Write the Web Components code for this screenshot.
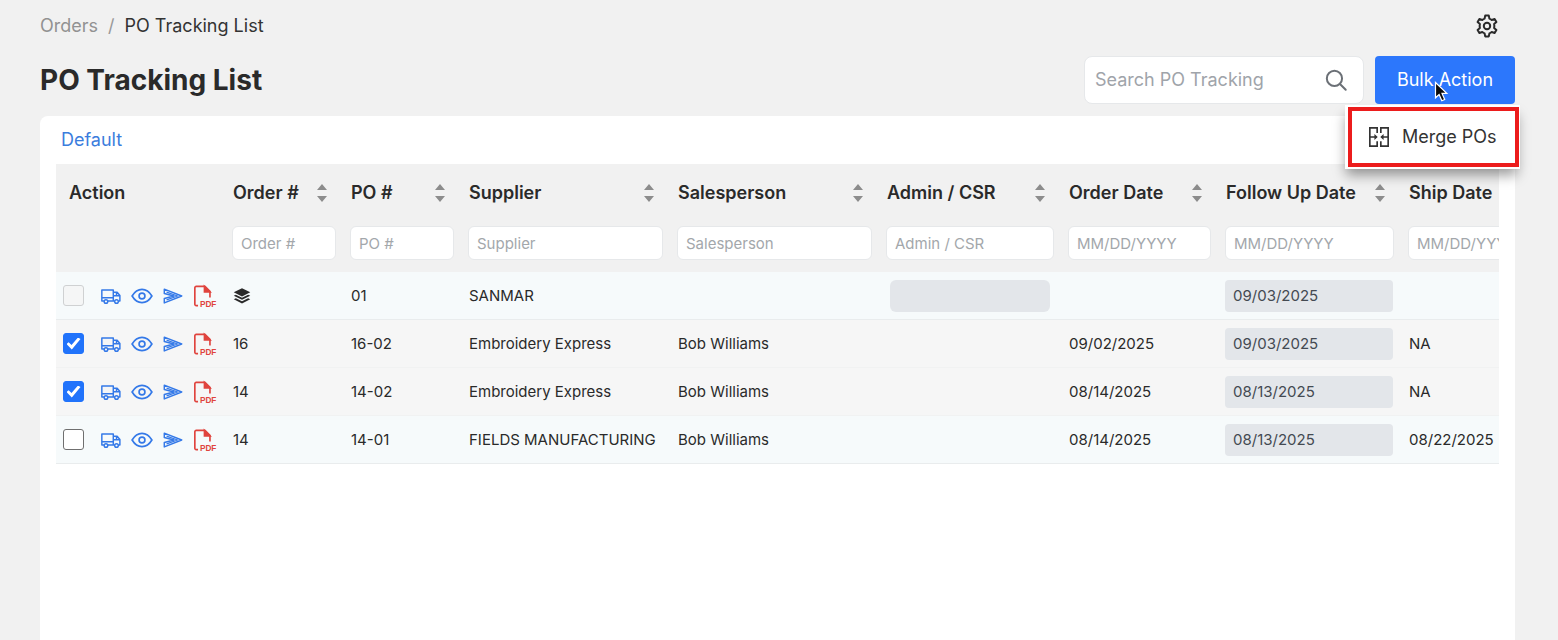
<!DOCTYPE html>
<html lang="en">
<head>
<meta charset="utf-8">
<meta name="viewport" content="width=device-width, initial-scale=1">
<title>PO Tracking List</title>
<style>
  html, body {
    height: 100%;
  }

  body {
    margin: 0;
    background: #f1f1f1;
    color: #2a2a2a;
    font: 15px/24px Inter, "Open Sans", sans-serif;
  }
</style>
</head>
<body>
<po-page></po-page>

<script>
const ICONS = {
  gear: `<svg viewBox="0 0 24 24" fill="none" stroke="currentColor" stroke-width="2" stroke-linejoin="round">
    <path d="M9.6 4.6 10.2 1.6h3.6l.6 3a7.8 7.8 0 0 1 2.3 1.35l2.9-1 1.8 3.1-2.3 2a7.8 7.8 0 0 1 0 3.9l2.3 2-1.8 3.1-2.9-1a7.8 7.8 0 0 1-2.3 1.35l-.6 3h-3.6l-.6-3a7.8 7.8 0 0 1-2.3-1.35l-2.9 1-1.8-3.1 2.3-2a7.8 7.8 0 0 1 0-3.9l-2.3-2 1.8-3.1 2.9 1A7.8 7.8 0 0 1 9.6 4.6z"/>
    <circle cx="12" cy="12" r="3.2"/></svg>`,
  search: `<svg viewBox="0 0 24 24" fill="none" stroke="currentColor" stroke-width="2.2" stroke-linecap="round">
    <circle cx="10.3" cy="10.3" r="8.3"/><path d="m16.6 16.6 6 6"/></svg>`,
  merge: `<svg viewBox="0 0 24 24" fill="none" stroke="currentColor" stroke-width="1.8">
    <path d="M10 7.5V2H2v20h8v-5.5M14 7.5V2h8v20h-8v-5.5M2 12h7M22 12h-7"/>
    <path d="M7 8.8v6.4l3.6-3.2zM17 8.8v6.4l-3.6-3.2z" fill="currentColor" stroke="none"/></svg>`,
  truck: `<svg viewBox="0 0 24 24" fill="none" stroke="currentColor" stroke-width="1.6" stroke-linejoin="round">
    <path d="M4.3 17.5H2V5.5h12.5v12H8.7M2 14h12.5M14.5 8h4.2l3 3.5v6h-1.5M14.5 17.5h1.2M14.5 11.8h7.2M18 8v3.5"/>
    <circle cx="6.5" cy="18" r="2"/><circle cx="18" cy="18" r="2"/></svg>`,
  eye: `<svg viewBox="0 0 24 24" fill="none" stroke="currentColor" stroke-width="1.8">
    <path d="M1.2 12C4 7.3 7.7 4.8 12 4.8S20 7.3 22.8 12C20 16.7 16.3 19.2 12 19.2S4 16.7 1.2 12z"/>
    <circle cx="12" cy="12" r="3.2"/></svg>`,
  send: `<svg viewBox="0 0 24 24" fill="none" stroke="currentColor" stroke-width="1.6" stroke-linejoin="round">
    <path d="M2.5 4.5 21.5 12l-19 7.5v-4.7L13 12 2.5 9.2z"/><path d="M5 7.8 17 12 5 16.2" stroke-width="1.4"/></svg>`,
  pdf: `<svg viewBox="0 0 24 24" fill="none" stroke="currentColor" stroke-width="1.8">
    <path d="M5.5 22.5h-2A1.5 1.5 0 0 1 2 21V3a1.5 1.5 0 0 1 1.5-1.5H13L18.5 7v6.5"/>
    <path d="M12.5 1.5v6h6z" fill="currentColor"/>
    <text x="7.5" y="23.5" font-size="9" font-weight="600" fill="currentColor" stroke="none">PDF</text></svg>`,
  layers: `<svg viewBox="0 0 24 24" fill="currentColor">
    <path d="M12 1.5 23 7l-11 5.5L1 7z"/>
    <path d="m3.8 10.2 8.2 4 8.2-4 2.8 1.4-11 5.5-11-5.5z"/>
    <path d="m3.8 15 8.2 4 8.2-4 2.8 1.4L12 22 1 16.4z"/></svg>`,
  sort: `<svg viewBox="0 0 12 20" fill="currentColor"><path d="m6 1 5 6H1zM6 19l-5-6h10z"/></svg>`,
  cursor: `<svg viewBox="0 0 14 22"><path d="M1.5 1.5v15.3l3.6-3.3 2.7 6.3 2.9-1.3L8 12.4h4.8z" fill="#0b0b0b" stroke="#fff" stroke-width="1.2"/></svg>`
};

class PoIcon extends HTMLElement {
  constructor() {
    super();
    this.attachShadow({ mode: 'open' });
  }

  connectedCallback() {
    this.shadowRoot.innerHTML = `
      <style>
        :host { display: inline-block; width: 22px; height: 22px; flex: none; }
        svg { display: block; width: 100%; height: 100%; overflow: visible; }
      </style>
      ${ICONS[this.getAttribute('name')]}
    `;
    this.setAttribute('aria-hidden', 'true');
  }
}

customElements.define('po-icon', PoIcon);

const breadcrumbTemplate = document.createElement('template');
breadcrumbTemplate.innerHTML = `
  <style>
    :host { display: block; }
    nav { display: flex; gap: 10px; font-size: 18px; line-height: 24px; color: #999; }
    ::slotted(a) { color: #929292; text-decoration: none; }
    ::slotted(span) { color: #333; }
  </style>
  <nav aria-label="Breadcrumb"><slot name="parent"></slot>/<slot></slot></nav>
`;

class PoBreadcrumb extends HTMLElement {
  constructor() {
    super();
    this.attachShadow({ mode: 'open' }).append(breadcrumbTemplate.content.cloneNode(true));
  }
}

customElements.define('po-breadcrumb', PoBreadcrumb);

const searchTemplate = document.createElement('template');
searchTemplate.innerHTML = `
  <style>
    :host { display: block; }
    .box {
      display: flex;
      align-items: center;
      box-sizing: border-box;
      width: 280px;
      height: 48px;
      padding: 0 16px 0 10px;
      border: 1px solid #e6e8ea;
      border-radius: 8px;
      background: #fff;
    }
    input {
      flex: 1;
      min-width: 0;
      padding: 0;
      border: 0;
      outline: 0;
      background: none;
      font: inherit;
      font-size: 18px;
      color: #333;
    }
    input::placeholder { color: #9fa4aa; opacity: 1; }
    button { display: flex; padding: 0; border: 0; background: none; color: #6b7076; }
  </style>
  <div class="box">
    <input type="text" placeholder="Search PO Tracking" aria-label="Search PO Tracking">
    <button type="button" aria-label="Search"><po-icon name="search"></po-icon></button>
  </div>
`;

class PoSearch extends HTMLElement {
  constructor() {
    super();
    this.attachShadow({ mode: 'open' }).append(searchTemplate.content.cloneNode(true));
  }
}

customElements.define('po-search', PoSearch);

const bulkTemplate = document.createElement('template');
bulkTemplate.innerHTML = `
  <style>
    :host { display: block; position: relative; }
    .trigger {
      display: block;
      width: 140px;
      height: 48px;
      padding: 0;
      border: 0;
      border-radius: 4px;
      background: #2c77fc;
      color: #fff;
      font: inherit;
      font-size: 18px;
    }
    .menu {
      position: absolute;
      z-index: 2;
      top: 51px;
      right: -4px;
      box-sizing: border-box;
      width: 171px;
      height: 60px;
      border: 4px solid #ec1c1c;
      background: #fff;
      box-shadow: -1px 0 0 2px #fff, -2px 8px 12px 0 rgba(0, 0, 0, .4);
    }
    .menu[hidden] { display: none; }
    .item {
      display: flex;
      align-items: center;
      gap: 12px;
      width: 100%;
      height: 100%;
      padding: 0 16px;
      border: 0;
      background: none;
      color: #333;
      font: inherit;
      font-size: 18px;
      white-space: nowrap;
    }
    .pointer { position: absolute; z-index: 3; top: 25px; left: 59px; width: 14px; height: 22px; }
  </style>
  <button class="trigger" type="button" aria-haspopup="menu" aria-expanded="true"><slot></slot></button>
  <div class="menu" role="menu">
    <button class="item" type="button" role="menuitem"><po-icon name="merge"></po-icon><slot name="item"></slot></button>
  </div>
  <po-icon class="pointer" name="cursor"></po-icon>
`;

class PoBulkMenu extends HTMLElement {
  constructor() {
    super();
    this.attachShadow({ mode: 'open' }).append(bulkTemplate.content.cloneNode(true));
    this.$trigger = this.shadowRoot.querySelector('.trigger');
    this.$menu = this.shadowRoot.querySelector('.menu');
  }

  connectedCallback() {
    this.$trigger.addEventListener('click', () => {
      this.$menu.hidden = !this.$menu.hidden;
      this.$trigger.setAttribute('aria-expanded', String(!this.$menu.hidden));
    });
  }
}

customElements.define('po-bulk-menu', PoBulkMenu);

const COLUMNS = [
  { label: 'Action', width: 169 },
  { label: 'Order #', width: 118, key: 'order', hint: 'Order #' },
  { label: 'PO #', width: 118, key: 'po', hint: 'PO #' },
  { label: 'Supplier', width: 209, key: 'supplier', hint: 'Supplier' },
  { label: 'Salesperson', width: 209, key: 'salesperson', hint: 'Salesperson' },
  { label: 'Admin / CSR', width: 182, key: 'admin', hint: 'Admin / CSR' },
  { label: 'Order Date', width: 157, key: 'orderDate', hint: 'MM/DD/YYYY' },
  { label: 'Follow Up Date', width: 183, key: 'followUp', hint: 'MM/DD/YYYY' },
  { label: 'Ship Date', width: 157, key: 'shipDate', hint: 'MM/DD/YYYY' }
];

const ROWS = [
  { locked: true, stacked: true, order: '', po: '01', supplier: 'SANMAR', salesperson: '', orderDate: '', followUp: '09/03/2025', shipDate: '' },
  { checked: true, order: '16', po: '16-02', supplier: 'Embroidery Express', salesperson: 'Bob Williams', orderDate: '09/02/2025', followUp: '09/03/2025', shipDate: 'NA' },
  { checked: true, order: '14', po: '14-02', supplier: 'Embroidery Express', salesperson: 'Bob Williams', orderDate: '08/14/2025', followUp: '08/13/2025', shipDate: 'NA' },
  { order: '14', po: '14-01', supplier: 'FIELDS MANUFACTURING', salesperson: 'Bob Williams', orderDate: '08/14/2025', followUp: '08/13/2025', shipDate: '08/22/2025' }
];

const ACTIONS = [
  ['truck', 'Shipment'],
  ['eye', 'View'],
  ['send', 'Send'],
  ['pdf', 'Download PDF']
];

class PoTable extends HTMLElement {
  constructor() {
    super();
    this.attachShadow({ mode: 'open' });
  }

  connectedCallback() {
    this.shadowRoot.innerHTML = `
      <style>
        :host { display: block; overflow: hidden; }
        table {
          width: ${COLUMNS.reduce((sum, col) => sum + col.width, 0)}px;
          table-layout: fixed;
          border-collapse: separate;
          border-spacing: 0;
        }
        th, td { box-sizing: border-box; padding: 0 8px; text-align: left; white-space: nowrap; }
        th:first-child { padding-left: 13px; }
        thead { background: #f1f1f1; }
        thead th { height: 58px; font-size: 18px; font-weight: 600; }
        .filters td { height: 50px; padding: 0 7px; vertical-align: top; }
        .head { display: flex; align-items: center; justify-content: space-between; }
        .sort { display: flex; margin-right: 7px; padding: 0; border: 0; background: none; color: #8c8c8c; }
        .sort po-icon { width: 12px; height: 20px; }
        .filter {
          display: block;
          box-sizing: border-box;
          width: 100%;
          height: 34px;
          margin-top: 4px;
          padding: 0 8px;
          border: 1px solid #e6e8ea;
          border-radius: 6px;
          outline: 0;
          background: #fff;
          font: inherit;
        }
        .filter::placeholder { color: #a3a7ab; opacity: 1; }
        tbody td { height: 48px; border-bottom: 1px solid #e9eced; }
        tbody td:first-child { padding-left: 7px; }
        tbody tr { background: #f6fafb; }
        tbody tr.checked { background: #f6f6f6; }
        tbody tr.checked td { border-bottom-color: #f1f2f2; }
        .actions { display: flex; align-items: center; gap: 9px; }
        .actions button { display: flex; padding: 0; border: 0; background: none; color: #3479e8; }
        .actions .pdf { color: #e0443e; }
        .actions input {
          display: grid;
          place-content: center;
          appearance: none;
          box-sizing: border-box;
          width: 21px;
          height: 21px;
          margin: 0 7px 0 0;
          border: 1px solid #6f6f6f;
          border-radius: 3px;
          background: #fff;
        }
        .actions input:disabled { border-color: #cfd1d2; background: #f5f6f6; }
        .actions input:checked { border-color: #2173fb; background: #2173fb; }
        .actions input:checked::before {
          content: "";
          width: 14px;
          height: 12px;
          background: #fff;
          clip-path: polygon(0 54%, 15% 39%, 36% 62%, 82% 0, 100% 13%, 38% 100%);
        }
        .stack { display: block; width: 18px; height: 18px; }
        .followup { padding: 0 8px 0 7px; }
        .field {
          display: block;
          box-sizing: border-box;
          width: 100%;
          height: 32px;
          padding: 0 8px;
          border: 0;
          border-radius: 4px;
          background: #e3e6ea;
          color: #444a52;
          font: inherit;
        }
        .admin { padding: 0 11px; }
        .admin .field { border-radius: 6px; }
      </style>
      <table>
        <colgroup>${COLUMNS.map(col => `<col style="width: ${col.width}px">`).join('')}</colgroup>
        <thead>
          <tr>${COLUMNS.map(col => this.renderHead(col)).join('')}</tr>
          <tr class="filters">${COLUMNS.map(col => this.renderFilter(col)).join('')}</tr>
        </thead>
        <tbody>${ROWS.map(row => this.renderRow(row)).join('')}</tbody>
      </table>
    `;
  }

  renderHead(col) {
    const sort = col.key
      ? `<button class="sort" type="button" aria-label="Sort by ${col.label}"><po-icon name="sort"></po-icon></button>`
      : '';
    return `<th scope="col"><div class="head">${col.label}${sort}</div></th>`;
  }

  renderFilter(col) {
    if (!col.key) {
      return '<td></td>';
    }
    return `<td><input class="filter" type="text" placeholder="${col.hint}" aria-label="Filter ${col.label}"></td>`;
  }

  renderRow(row) {
    const cells = COLUMNS.slice(1).map(col => {
      if (col.key === 'order' && row.stacked) {
        return '<td><po-icon class="stack" name="layers"></po-icon></td>';
      }
      if (col.key === 'followUp') {
        return `<td class="followup"><input class="field" type="text" readonly value="${row.followUp}" aria-label="${col.label}"></td>`;
      }
      if (col.key === 'admin') {
        return `<td class="admin">${row.stacked ? '<input class="field" type="text" readonly aria-label="Admin / CSR">' : ''}</td>`;
      }
      return `<td>${row[col.key]}</td>`;
    });

    return `
      <tr class="${row.checked ? 'checked' : ''}">
        <td><div class="actions">
          <input type="checkbox" aria-label="Select PO ${row.po}" ${row.checked ? 'checked' : ''} ${row.locked ? 'disabled' : ''}>
          ${ACTIONS.map(([icon, label]) => `<button class="${icon}" type="button" aria-label="${label}"><po-icon name="${icon}"></po-icon></button>`).join('')}
        </div></td>
        ${cells.join('')}
      </tr>
    `;
  }
}

customElements.define('po-table', PoTable);

const pageTemplate = document.createElement('template');
pageTemplate.innerHTML = `
  <style>
    :host {
      display: flex;
      flex-direction: column;
      box-sizing: border-box;
      min-height: 100%;
      padding: 12px 43px 0 40px;
    }
    .top, .title { display: flex; align-items: center; justify-content: space-between; }
    .top { height: 28px; padding-right: 16px; }
    .settings { display: flex; padding: 0; border: 0; background: none; color: #2a2a2a; }
    .settings po-icon { width: 24px; height: 24px; }
    .title { padding: 16px 0 12px; }
    h1 { margin: 0; font-size: 28px; line-height: 40px; font-weight: 700; }
    .tools { display: flex; gap: 11px; }
    .card { flex: 1; padding: 0 16px; border-radius: 8px 8px 0 0; background: #fff; }
    .tab { display: block; width: max-content; padding: 12px 5px; color: #3b7ddd; font-size: 18px; text-decoration: none; }
  </style>
  <header class="top">
    <po-breadcrumb><a slot="parent" href="#orders">Orders</a><span>PO Tracking List</span></po-breadcrumb>
    <button class="settings" type="button" aria-label="Settings"><po-icon name="gear"></po-icon></button>
  </header>
  <div class="title">
    <h1>PO Tracking List</h1>
    <div class="tools">
      <po-search></po-search>
      <po-bulk-menu>Bulk Action<span slot="item">Merge POs</span></po-bulk-menu>
    </div>
  </div>
  <main class="card">
    <a class="tab" href="#default">Default</a>
    <po-table></po-table>
  </main>
`;

class PoPage extends HTMLElement {
  constructor() {
    super();
    this.attachShadow({ mode: 'open' }).append(pageTemplate.content.cloneNode(true));
  }
}

customElements.define('po-page', PoPage);
</script>
</body>
</html>
